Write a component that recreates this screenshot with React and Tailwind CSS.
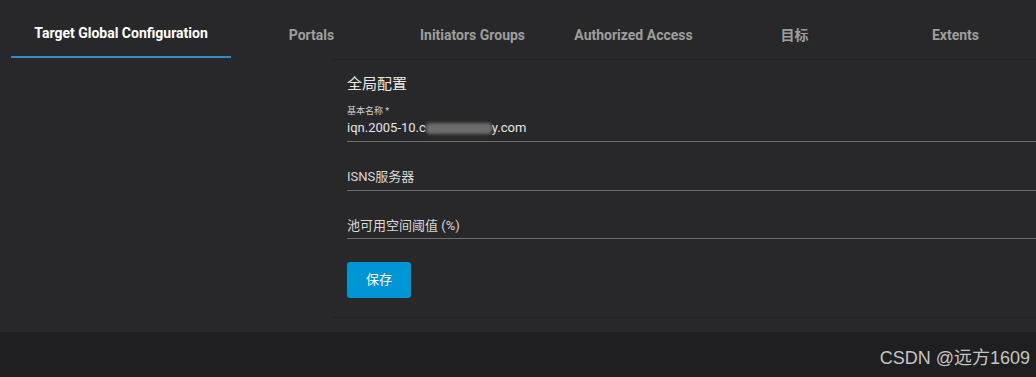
export default function App() {
  const tabs = ["Portals", "Initiators Groups", "Authorized Access", "目标", "Extents"];
  const font = { fontFamily: "Roboto, 'Noto Sans CJK SC', sans-serif" };
  return (
    <div className="w-[1036px] h-[377px] bg-[#28282a] flex flex-col overflow-hidden" style={font}>
      <div className="h-[332px] flex flex-col">
        <div className="flex h-[59px] pl-[11px]">
          <div className="w-[220px] flex flex-col">
            <div className="flex-1 flex items-center justify-center pt-[10px] text-[14px] font-bold text-white">Target Global Configuration</div>
            <div className="h-[2px] bg-[#2c8fbf] mb-[1px]" />
          </div>
          {tabs.map((t) => (
            <div key={t} className="w-[161px] flex items-center justify-center pt-[12px] text-[14px] font-bold text-[#9e9e9e]">{t}</div>
          ))}
        </div>
        <div className="flex flex-1">
          <div className="w-[333px]" />
          <div className="flex-1 flex flex-col">
            <div className="h-[259px] border-t border-b border-[#222224] bg-[#28282a] pl-[14px] pt-[15px] flex flex-col">
              <div className="text-[15px] text-[#e8e8e8] leading-[18px]">全局配置</div>
              <div className="mt-[13px] text-[9px] leading-[11px] text-[#cfcfcf]">基本名称 *</div>
              <div className="mt-[3px] text-[13px] leading-[16px] text-[#e6e6e6] flex items-center">
                <span>iqn.2005-10.c</span>
                <span className="inline-block w-[66px] h-[11px] bg-[#6c6c6c] rounded-[4px] blur-[1.5px]" />
                <span>y.com</span>
              </div>
              <div className="mt-[5px] h-px bg-[#6e6e6e]" />
              <div className="mt-[27px] text-[13px] leading-[16px] text-[#d8d8d8]">ISNS服务器</div>
              <div className="mt-[5px] h-px bg-[#6e6e6e]" />
              <div className="mt-[27px] text-[13px] leading-[16px] text-[#d8d8d8]">池可用空间阈值 (%)</div>
              <div className="mt-[4px] h-px bg-[#6e6e6e]" />
              <button className="mt-[23px] w-[64px] h-[36px] rounded-[3px] bg-[#0095d5] text-white text-[13px]">保存</button>
            </div>
          </div>
        </div>
      </div>
      <div className="flex-1 bg-[#1f1f21] flex justify-end items-start pr-[6px] pt-[15px]">
        <span className="text-[18px] text-[#c4c4c4] leading-[22px]" style={{ fontFamily: "'Liberation Sans', 'Noto Sans CJK SC', sans-serif" }}>CSDN @远方1609</span>
      </div>
    </div>
  );
}
